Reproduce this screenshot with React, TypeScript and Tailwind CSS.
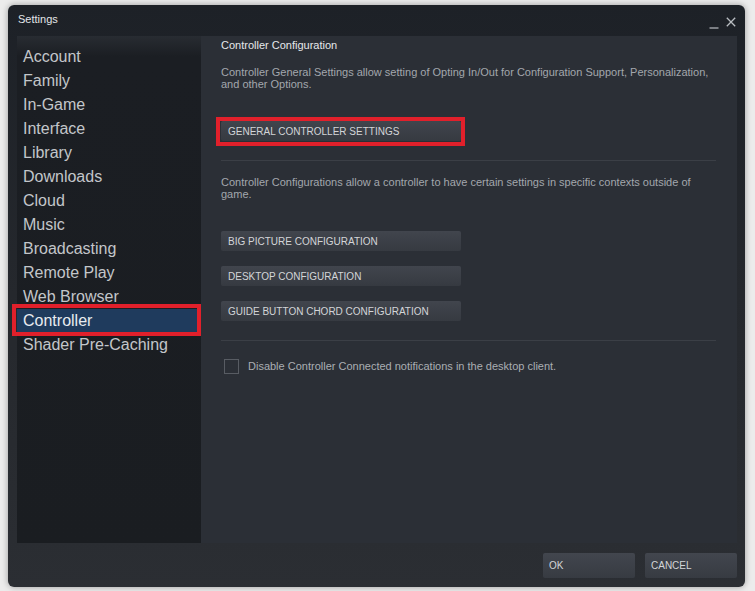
import React from "react";

const sections = [
  "Account",
  "Family",
  "In-Game",
  "Interface",
  "Library",
  "Downloads",
  "Cloud",
  "Music",
  "Broadcasting",
  "Remote Play",
  "Web Browser",
  "Controller",
  "Shader Pre-Caching",
];

const configButtons = [
  "BIG PICTURE CONFIGURATION",
  "DESKTOP CONFIGURATION",
  "GUIDE BUTTON CHORD CONFIGURATION",
];

function SteamButton({ label, className = "" }: { label: string; className?: string }) {
  return (
    <button
      className={
        "flex items-center h-[20px] w-[240px] pl-[7px] text-[10px] text-[#d3d5d8] bg-gradient-to-b from-[#41454d] to-[#363a41] rounded-[2px] text-left " +
        className
      }
    >
      {label}
    </button>
  );
}

export default function App() {
  return (
    <div
      className="w-[755px] h-[591px] bg-[#ececec] pt-[5px] pl-[8px]"
      style={{ fontFamily: '"Liberation Sans", Arial, sans-serif' }}
    >
      <div className="w-[737px] h-[582px] rounded-[6px] bg-gradient-to-b from-[#1d2127] via-[#25282d] to-[#2b2e33] shadow-[0_0_6px_rgba(0,0,0,0.35)] flex flex-col">
        {/* title bar */}
        <div className="h-[31px] flex items-start justify-between pl-[10px] pr-[9px] pt-[8px]">
          <span className="text-[11px] leading-[13px] text-[#e4e6e9]">Settings</span>
          <div className="flex items-center gap-[7px] text-[#b9bdc2]">
            <svg width="10" height="10" viewBox="0 0 10 10" className="mt-[6px]">
              <path d="M0.5 9 H9.5" stroke="currentColor" strokeWidth="1.2" />
            </svg>
            <svg width="10" height="10" viewBox="0 0 10 10" className="mt-[1px]">
              <path d="M0.8 0.8 L9.2 9.2 M9.2 0.8 L0.8 9.2" stroke="currentColor" strokeWidth="1.3" />
            </svg>
          </div>
        </div>

        {/* body */}
        <div className="h-[507px] flex pl-[9px] pr-[8px]">
          <div className="w-[184px] bg-gradient-to-b from-[#282c32] via-[#1b1e23] via-[4%] to-[#1a1d21] pt-[9px] flex flex-col">
            {sections.map((s) => {
              const active = s === "Controller";
              return (
                <div key={s} className="relative h-[24px]">
                  <div
                    className={
                      "h-full mr-[3px] pl-[6px] flex items-center text-[16px] " +
                      (active ? "bg-[#1f3b5d] text-[#e8ecf0]" : "text-[#c3c6ca]")
                    }
                  >
                    {s}
                  </div>
                  {active && (
                    <div className="absolute -left-[5px] -top-[5px] right-0 -bottom-[3px] border-[4px] border-[#e1202b] pointer-events-none" />
                  )}
                </div>
              );
            })}
          </div>

          <div className="flex-1 bg-[#2b2f36] pl-[20px] pr-[21px] pt-[2px] text-[11px]">
            <div className="leading-[14px] text-[#e6e8eb]">Controller Configuration</div>
            <p className="mt-[14px] leading-[12px] text-[#a3a7ad]">
              Controller General Settings allow setting of Opting In/Out for Configuration Support, Personalization,
              and other Options.
            </p>
            <div className="relative w-[240px] mt-[31px]">
              <SteamButton label="GENERAL CONTROLLER SETTINGS" className="h-[19px]" />
              <div className="absolute -left-[5px] -top-[4px] -right-[4px] -bottom-[5px] border-[4px] border-[#e1202b] pointer-events-none" />
            </div>
            <div className="mt-[19px] h-px bg-[#3b3f46]" />
            <p className="mt-[15px] leading-[12px] text-[#a3a7ad]">
              Controller Configurations allow a controller to have certain settings in specific contexts outside of
              game.
            </p>
            <div className="mt-[31px] flex flex-col gap-[15px]">
              {configButtons.map((b) => (
                <SteamButton key={b} label={b} />
              ))}
            </div>
            <div className="mt-[19px] h-px bg-[#3b3f46]" />
            <label className="mt-[18px] ml-[3px] flex items-center gap-[9px]">
              <span className="w-[15px] h-[15px] border border-[#585c63] bg-[#2b2f36]" />
              <span className="text-[#aaaeb3] leading-[15px]">
                Disable Controller Connected notifications in the desktop client.
              </span>
            </label>
          </div>
        </div>

        {/* footer */}
        <div className="flex-1 flex justify-end items-start gap-[10px] pt-[10px] pr-[8px]">
          {["OK", "CANCEL"].map((b) => (
            <button
              key={b}
              className="w-[92px] h-[25px] pl-[6px] text-left text-[10px] text-[#d3d5d8] bg-gradient-to-b from-[#42464e] to-[#373b42] rounded-[2px]"
            >
              {b}
            </button>
          ))}
        </div>
      </div>
    </div>
  );
}
